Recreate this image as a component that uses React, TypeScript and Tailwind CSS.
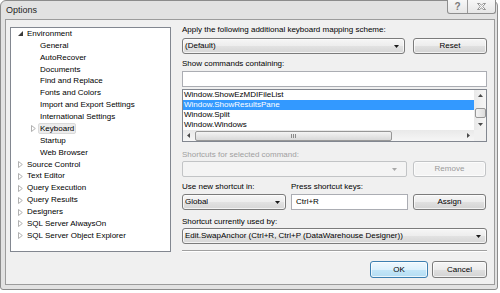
import React from "react";

type TreeItem = { label: string; level: 0 | 1; exp?: "open" | "closed"; selected?: boolean };

const tree: TreeItem[] = [
  { label: "Environment", level: 0, exp: "open" },
  { label: "General", level: 1 },
  { label: "AutoRecover", level: 1 },
  { label: "Documents", level: 1 },
  { label: "Find and Replace", level: 1 },
  { label: "Fonts and Colors", level: 1 },
  { label: "Import and Export Settings", level: 1 },
  { label: "International Settings", level: 1 },
  { label: "Keyboard", level: 1, exp: "closed", selected: true },
  { label: "Startup", level: 1 },
  { label: "Web Browser", level: 1 },
  { label: "Source Control", level: 0, exp: "closed" },
  { label: "Text Editor", level: 0, exp: "closed" },
  { label: "Query Execution", level: 0, exp: "closed" },
  { label: "Query Results", level: 0, exp: "closed" },
  { label: "Designers", level: 0, exp: "closed" },
  { label: "SQL Server AlwaysOn", level: 0, exp: "closed" },
  { label: "SQL Server Object Explorer", level: 0, exp: "closed" },
];

const listItems = [
  "Window.ShowEzMDIFileList",
  "Window.ShowResultsPane",
  "Window.Split",
  "Window.Windows",
];

function DownArrow({ color = "#1a1a1a" }: { color?: string }) {
  return (
    <svg width="5" height="3" viewBox="0 0 5 3">
      <path d="M0 0h5L2.5 3z" fill={color} />
    </svg>
  );
}

function Btn({
  children,
  className = "",
  kind = "normal",
}: {
  children: React.ReactNode;
  className?: string;
  kind?: "normal" | "disabled" | "default";
}) {
  const style =
    kind === "disabled"
      ? "border-[#c2c4c6] bg-[#f4f4f4] text-[#9a9a9a]"
      : kind === "default"
      ? "border-[#3c7fb1] bg-[linear-gradient(to_bottom,#eef8fe_0%,#dcf1fd_50%,#c4e6f8_51%,#b4ddf3_100%)] text-black"
      : "border-[#7b7b7b] bg-[linear-gradient(to_bottom,#f6f6f6_0%,#ececec_50%,#e0e0e0_51%,#d3d3d3_100%)] text-black";
  return (
    <div
      className={`h-full flex items-center justify-center border rounded-[3px] shadow-[inset_0_0_0_1px_rgba(255,255,255,0.7)] ${style} ${className}`}
    >
      {children}
    </div>
  );
}

function Combo({
  children,
  className = "",
  disabled = false,
  arrowMr = "mr-[5px]",
}: {
  children?: React.ReactNode;
  className?: string;
  disabled?: boolean;
  arrowMr?: string;
}) {
  return (
    <div
      className={`h-full flex items-center justify-between pl-[2px] border ${
        disabled
          ? "border-[#c2c4c6] bg-[#f4f4f4] rounded-[2px]"
          : "border-[#7b7b7b] rounded-[3px] bg-[linear-gradient(to_bottom,#f6f6f6_0%,#ededed_50%,#e2e2e2_51%,#d6d6d6_100%)] shadow-[inset_0_0_0_1px_rgba(255,255,255,0.7)]"
      } ${className}`}
    >
      <span className="truncate">{children}</span>
      <span className={`${arrowMr} flex items-center`}>
        <DownArrow color={disabled ? "#a8a8a8" : "#1a1a1a"} />
      </span>
    </div>
  );
}

function TreeArrow({ exp }: { exp?: "open" | "closed" }) {
  if (exp === "open") {
    return (
      <svg width="5" height="5" viewBox="0 0 5 5">
        <path d="M5 0V5H0z" fill="#3a3a3a" />
      </svg>
    );
  }
  if (exp === "closed") {
    return (
      <svg width="5" height="7" viewBox="0 0 5 7">
        <path d="M0.5 0.5L4.3 3.5L0.5 6.5z" fill="#ffffff" stroke="#a8a8a8" strokeWidth="0.9" />
      </svg>
    );
  }
  return null;
}

export default function App() {
  return (
    <div className="w-[500px] h-[293px] bg-white font-['Liberation_Sans',Arial,sans-serif] text-[8px] leading-none text-black">
      <div className="w-[498px] h-[290px] border border-[#8c8c8c] rounded-t-[6px] rounded-b-[3px] bg-[#e2e2e2] flex flex-col">
        {/* Title bar */}
        <div className="h-[18px] flex items-start justify-between shrink-0">
          <div className="self-center pl-[5px] pt-[1px] text-[9px] text-[#1e1e1e]">Options</div>
          <div className="flex mr-[1px] -mt-[1px] h-[14px] border border-[#8e8e8e] border-t-0 rounded-b-[3px] overflow-hidden bg-[linear-gradient(to_bottom,#f7f7f7,#e6e6e6)]">
            <div className="w-[20px] border-r border-[#9a9a9a] flex items-center justify-center text-[10px] font-bold text-[#7a7a7a]">
              ?
            </div>
            <div className="w-[27px] flex items-center justify-center">
              <svg width="9" height="7" viewBox="0 0 10 8">
                <path
                  d="M0.5 0.5H3L5 2.7L7 0.5H9.5L6.4 4L9.5 7.5H7L5 5.3L3 7.5H0.5L3.6 4z"
                  fill="#ffffff"
                  stroke="#6a6a6a"
                  strokeWidth="0.8"
                />
              </svg>
            </div>
          </div>
        </div>

        {/* Client area */}
        <div className="ml-[4px] mr-[2px] mb-[4px] flex-1 border border-[#9c9c9c] bg-[#f0f0f0] flex items-start">
          {/* Tree */}
          <div className="ml-[4px] mt-[7px] w-[161px] h-[225px] border border-[#828790] bg-white shrink-0">
            {tree.map((t) => (
              <div key={t.label} className="h-[11.88px] flex items-center">
                <div
                  className={`${t.level === 0 ? "ml-[7px]" : "ml-[20px]"} w-[9px] flex items-center`}
                >
                  <TreeArrow exp={t.exp} />
                </div>
                {t.selected ? (
                  <span className="-ml-[2px] h-[11px] flex items-center px-[1px] border border-[#dadada] bg-[#ececec] rounded-[2px]">
                    {t.label}
                  </span>
                ) : (
                  <span>{t.label}</span>
                )}
              </div>
            ))}
          </div>

          {/* Right column */}
          <div className="ml-[11px] w-[305px] pt-[5px] flex flex-col shrink-0">
            <div className="h-[10px] leading-[10px]">Apply the following additional keyboard mapping scheme:</div>
            <div className="mt-[3px] h-[16px] flex">
              <Combo className="w-[223px]">(Default)</Combo>
              <Btn className="ml-[8px] w-[74px]">Reset</Btn>
            </div>

            <div className="mt-[5px] h-[10px] leading-[10px]">Show commands containing:</div>
            <div className="mt-[2px] h-[16px] border border-[#abadb3] bg-white" />

            {/* Command list */}
            <div className="mt-[2px] h-[53px] border border-[#828790] bg-white flex flex-col">
              <div className="h-[40px] flex">
                <div className="flex-1 flex flex-col">
                  {listItems.map((it) => (
                    <div
                      key={it}
                      className={`h-[10px] flex items-center pl-[1px] ${
                        it === "Window.ShowResultsPane" ? "bg-[#3399ff] text-white" : ""
                      }`}
                    >
                      {it}
                    </div>
                  ))}
                </div>
                {/* vertical scrollbar */}
                <div className="w-[12px] flex flex-col bg-[linear-gradient(to_right,#e9e9e9,#f6f6f6)]">
                  <div className="h-[11px] flex items-center justify-center">
                    <svg width="5" height="3" viewBox="0 0 5 3">
                      <path d="M0 3h5L2.5 0z" fill="#4a4a4a" />
                    </svg>
                  </div>
                  <div className="flex-1 flex flex-col justify-end items-center pb-[1px]">
                    <div className="w-[11px] h-[10px] border border-[#979797] rounded-[2px] bg-[linear-gradient(to_right,#f4f4f4,#dcdcdc)]" />
                  </div>
                  <div className="h-[11px] flex items-center justify-center">
                    <DownArrow color="#4a4a4a" />
                  </div>
                </div>
              </div>
              {/* horizontal scrollbar */}
              <div className="flex-1 flex">
                <div className="flex-1 flex bg-[linear-gradient(to_bottom,#e9e9e9,#f6f6f6)]">
                  <div className="w-[11px] flex items-center justify-center">
                    <svg width="3" height="5" viewBox="0 0 3 5">
                      <path d="M3 0v5L0 2.5z" fill="#4a4a4a" />
                    </svg>
                  </div>
                  <div className="flex-1 flex items-center">
                    <div className="ml-[1px] w-[197px] h-[10px] border border-[#979797] rounded-[2px] bg-[linear-gradient(to_bottom,#f4f4f4,#d9d9d9)] flex items-center justify-center">
                      <svg width="5" height="4" viewBox="0 0 5 4">
                        <path d="M0.5 0v4M2.5 0v4M4.5 0v4" stroke="#8a8a8a" strokeWidth="1" />
                      </svg>
                    </div>
                  </div>
                  <div className="w-[11px] flex items-center justify-center">
                    <svg width="3" height="5" viewBox="0 0 3 5">
                      <path d="M0 0v5L3 2.5z" fill="#4a4a4a" />
                    </svg>
                  </div>
                </div>
                <div className="w-[12px] bg-[#f0f0f0]" />
              </div>
            </div>

            <div className="mt-[8px] h-[10px] leading-[10px] text-[#a0a0a0]">Shortcuts for selected command:</div>
            <div className="mt-[1px] h-[16px] flex">
              <Combo className="w-[225px]" disabled arrowMr="mr-[9px]" />
              <Btn className="ml-[6px] w-[73px]" kind="disabled">
                Remove
              </Btn>
            </div>

            <div className="mt-[5px] h-[10px] leading-[10px] flex">
              <div className="w-[109px]">Use new shortcut in:</div>
              <div>Press shortcut keys:</div>
            </div>
            <div className="mt-[2px] h-[16px] flex">
              <Combo className="w-[104px]">Global</Combo>
              <div className="ml-[5px] w-[117px] h-full border border-[#abadb3] bg-white flex items-center pl-[4px]">
                Ctrl+R
              </div>
              <Btn className="ml-[5px] w-[73px]">Assign</Btn>
            </div>

            <div className="mt-[7px] h-[10px] leading-[10px]">Shortcut currently used by:</div>
            <div className="mt-[1px] h-[16px] flex">
              <Combo className="w-[305px]">Edit.SwapAnchor (Ctrl+R, Ctrl+P (DataWarehouse Designer))</Combo>
            </div>

            <div className="mt-[6px] h-[2px] border-t border-[#a0a0a0] border-b border-b-white" />

            <div className="mt-[9px] h-[17px] flex justify-end">
              <Btn className="w-[58px]" kind="default">
                OK
              </Btn>
              <Btn className="ml-[4px] w-[55px]">Cancel</Btn>
            </div>
          </div>
        </div>
      </div>
    </div>
  );
}
